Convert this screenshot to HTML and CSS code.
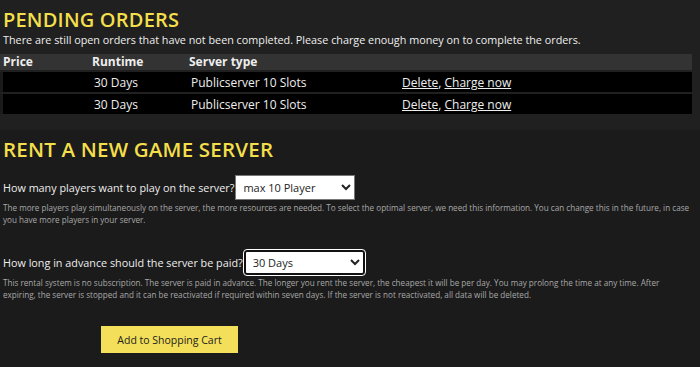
FILE: index.html
```html
<!DOCTYPE html>
<html lang="en">
<head>
    <meta charset="UTF-8">
    <meta name="viewport" content="width=device-width, initial-scale=1.0">
    <title>Game Server</title>
    <link rel="stylesheet" href="styles.css">
</head>
<body>
    <section class="pending">
        <h1>PENDING ORDERS</h1>
        <p class="intro">There are still open orders that have not been completed. Please charge enough money on to complete the orders.</p>

        <table class="orders">
            <thead>
                <tr>
                    <th class="col-price">Price</th>
                    <th class="col-runtime">Runtime</th>
                    <th class="col-type">Server type</th>
                    <th></th>
                </tr>
            </thead>
            <tbody>
                <tr>
                    <td></td>
                    <td>30 Days</td>
                    <td>Publicserver 10 Slots</td>
                    <td><a href="#">Delete</a>, <a href="#">Charge now</a></td>
                </tr>
                <tr>
                    <td></td>
                    <td>30 Days</td>
                    <td>Publicserver 10 Slots</td>
                    <td><a href="#">Delete</a>, <a href="#">Charge now</a></td>
                </tr>
            </tbody>
        </table>
    </section>

    <section class="rent">
        <h1>RENT A NEW GAME SERVER</h1>

        <form class="rent-form">
            <div class="field">
                <label for="players">How many players want to play on the server?</label>
                <select id="players" class="players-select">
                    <option>max 10 Player</option>
                    <option>max 20 Player</option>
                    <option>max 32 Player</option>
                </select>
            </div>
            <p class="help">The more players play simultaneously on the server, the more resources are needed. To select the optimal server, we need this information. You can change this in the future, in case you have more players in your server.</p>

            <div class="field field-second">
                <label for="runtime">How long in advance should the server be paid?</label>
                <select id="runtime" class="runtime-select">
                    <option>30 Days</option>
                    <option>60 Days</option>
                    <option>90 Days</option>
                </select>
            </div>
            <p class="help help-runtime">This rental system is no subscription. The server is paid in advance. The longer you rent the server, the cheapest it will be per day. You may prolong the time at any time. After expiring, the server is stopped and it can be reactivated if required within seven days. If the server is not reactivated, all data will be deleted.</p>

            <button type="button" class="btn">Add to Shopping Cart</button>
        </form>
    </section>
</body>
</html>
```

FILE: styles.css
```css
* {
    margin: 0;
    padding: 0;
    box-sizing: border-box;
}

body {
    font-family: 'Open Sans', 'Noto Sans', sans-serif;
    background: #1b1b1b;
    color: #eeeeee;
    font-size: 12px;
}

h1 {
    color: #f3df4b;
    font-weight: 600;
    letter-spacing: 0.2px;
}

.pending {
    background: #202020;
    padding: 8px 8px 14px 3px;
}

.pending h1 {
    font-size: 20px;
    line-height: 24px;
}

.intro {
    font-size: 10.8px;
    line-height: 15px;
    margin-bottom: 5px;
}

.orders {
    border-collapse: separate;
    border-spacing: 0 2px;
    margin-left: -3px;
    width: calc(100% + 3px);
}

.orders th {
    background: #333333;
    text-align: left;
    font-weight: 700;
    font-size: 12px;
    height: 16px;
    line-height: 16px;
    padding: 0 3px;
}

.orders td {
    background: #000000;
    height: 20px;
    padding: 0 3px;
    font-size: 12px;
}

.orders td:first-child {
    border-left: 3px solid #1a1a1a;
}

.col-price { width: 89px; }
.col-runtime { width: 97px; }
.col-type { width: 213px; }

.orders td:nth-child(2),
.orders td:nth-child(3) {
    padding-left: 5px;
}

.orders a {
    color: #eeeeee;
}

.rent {
    padding: 6px 5px 20px 3px;
}

.rent h1 {
    font-size: 20.5px;
    line-height: 26px;
    margin-bottom: 13px;
}

.field {
    display: flex;
    align-items: center;
    gap: 1px;
}

.field label {
    font-size: 10.8px;
}

.field-second {
    margin-top: 24px;
}

select {
    font-family: inherit;
    font-size: 11px;
    color: #222222;
    background: #ffffff;
    height: 25px;
    padding: 0 3px;
    border: 1px solid #777777;
}

.players-select {
    width: 120px;
}

.runtime-select {
    width: 121px;
    border: 2px solid #111111;
    border-radius: 3px;
    outline: 1px solid #ffffff;
}

.help {
    color: #a8a8a8;
    font-size: 8.15px;
    line-height: 12px;
    margin-top: 2px;
}

.help-runtime {
    padding-right: 20px;
}

.btn {
    display: block;
    margin: 24px 0 0 97px;
    width: 139px;
    height: 29px;
    background: #f3df59;
    color: #222222;
    border: 1px solid #1a1a1a;
    font-family: inherit;
    font-size: 10.5px;
    cursor: pointer;
}
```
